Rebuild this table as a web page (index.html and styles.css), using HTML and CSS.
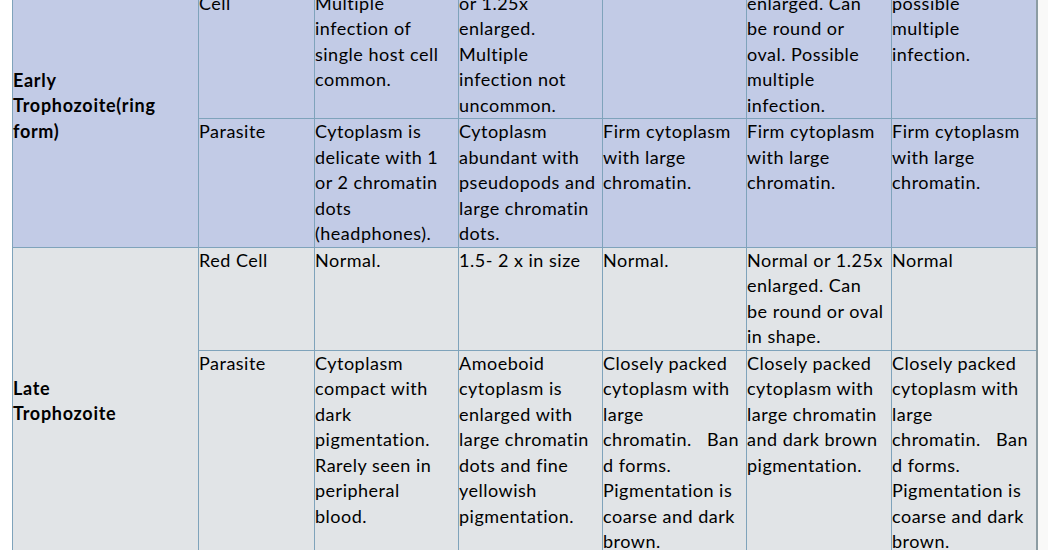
FILE: index.html
```html
<!DOCTYPE html>
<html>
<head>
<meta charset="utf-8">
<link rel="stylesheet" href="styles.css">
</head>
<body>
<div class="page">
<table class="grid">
<colgroup>
<col class="c-stage"><col class="c-feat"><col class="c-sp"><col class="c-sp"><col class="c-sp"><col class="c-sp2"><col class="c-sp2">
</colgroup>
<tbody>
<tr class="blue">
<th class="stage" rowspan="2">Early<br>Trophozoite(ring<br>form)</th>
<td>Red<br>Cell</td>
<td>Normal.<br>Multiple<br>infection of<br>single host cell<br>common.</td>
<td>Normal or 1.25x<br>or 1.25x<br>enlarged.<br>Multiple<br>infection not<br>uncommon.</td>
<td>Normal.</td>
<td>Normal or 1.25x<br>enlarged. Can<br>be round or<br>oval. Possible<br>multiple<br>infection.</td>
<td>Normal,<br>possible<br>multiple<br>infection.</td>
</tr>
<tr class="blue">
<td>Parasite</td>
<td>Cytoplasm is<br>delicate with 1<br>or 2 chromatin<br>dots<br>(headphones).</td>
<td>Cytoplasm<br>abundant with<br>pseudopods and<br>large chromatin<br>dots.</td>
<td>Firm cytoplasm<br>with large<br>chromatin.</td>
<td>Firm cytoplasm<br>with large<br>chromatin.</td>
<td>Firm cytoplasm<br>with large<br>chromatin.</td>
</tr>
<tr class="grey">
<th class="stage" rowspan="2">Late<br>Trophozoite</th>
<td>Red Cell</td>
<td>Normal.</td>
<td>1.5- 2 x in size</td>
<td>Normal.</td>
<td>Normal or 1.25x<br>enlarged. Can<br>be round or oval<br>in shape.</td>
<td>Normal</td>
</tr>
<tr class="grey">
<td>Parasite</td>
<td>Cytoplasm<br>compact with<br>dark<br>pigmentation.<br>Rarely seen in<br>peripheral<br>blood.</td>
<td>Amoeboid<br>cytoplasm is<br>enlarged with<br>large chromatin<br>dots and fine<br>yellowish<br>pigmentation.</td>
<td>Closely packed<br>cytoplasm with<br>large<br>chromatin.&nbsp;&nbsp; Ban<br>d forms.<br>Pigmentation is<br>coarse and dark<br>brown.</td>
<td>Closely packed<br>cytoplasm with<br>large chromatin<br>and dark brown<br>pigmentation.</td>
<td>Closely packed<br>cytoplasm with<br>large<br>chromatin.&nbsp;&nbsp; Ban<br>d forms.<br>Pigmentation is<br>coarse and dark<br>brown.</td>
</tr>
</tbody>
</table>
</div>
</body>
</html>
```
FILE: styles.css
```css
html, body {
  margin: 0;
  padding: 0;
  background: #f9f9f8;
  overflow: hidden;
}
.page {
  padding-left: 12px;
  height: 550px;
  overflow: hidden;
  background: linear-gradient(to right, #ffffff 12px, #f9f9f8 12px);
}
.grid {
  margin-top: -36px;
  border-collapse: collapse;
  table-layout: fixed;
  width: 1025px;
  font-family: Lato, "Open Sans", sans-serif;
  font-size: 18px;
  letter-spacing: 0.5px;
  line-height: 25.5px;
  color: #000;
}
.c-stage { width: 186px; }
.c-feat { width: 116px; }
.c-sp { width: 144px; }
.c-sp2 { width: 145px; }
.grid td, .grid th {
  border: 1px solid #7fa3bb;
  padding: 0;
  vertical-align: top;
  text-align: left;
  white-space: nowrap;
  overflow: visible;
}
.grid th.stage {
  vertical-align: middle;
  font-weight: bold;
  letter-spacing: 0.7px;
}
.grid tr.blue td, .grid tr.blue th { background: #c2cbe6; }
.grid tr.grey td, .grid tr.grey th { background: #e1e4e7; }
.grid tr td:last-child { border-right: 2px solid #8c9ca3; }
```
